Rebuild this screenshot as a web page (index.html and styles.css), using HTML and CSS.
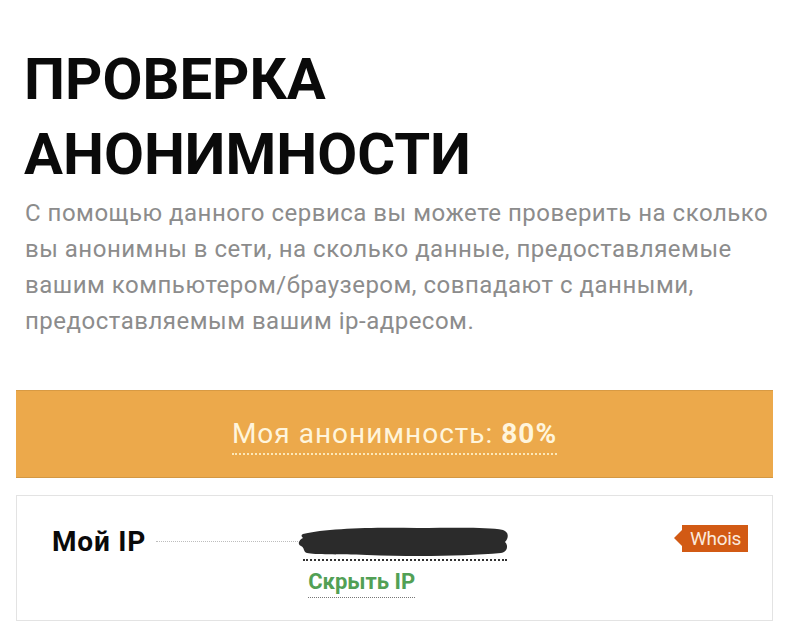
FILE: index.html
```html
<!DOCTYPE html>
<html lang="ru">
<head>
<meta charset="utf-8">
<link rel="stylesheet" href="styles.css">
</head>
<body>
<div class="page">
  <h1 class="title">ПРОВЕРКА<br>АНОНИМНОСТИ</h1>
  <p class="lead">С помощью данного сервиса вы можете проверить на сколько<br>вы анонимны в сети, на сколько данные, предоставляемые<br>вашим компьютером/браузером, совпадают с данными,<br>предоставляемым вашим ip-адресом.</p>
  <div class="score">
    <span class="score-text">Моя анонимность: <b>80%</b></span>
  </div>
  <div class="ipbox">
    <div class="ip-label">Мой IP</div>
    <div class="ip-dots"></div>
    <div class="ip-col">
      <div class="ip-value">
        <svg width="214" height="34" viewBox="0 0 214 34">
          <path d="M6 10 C30 4 80 3 120 4 C160 4 190 3 206 6 C212 8 212 14 208 18 C212 22 210 28 204 29 C170 32 120 33 70 31 C40 30 18 31 10 29 C6 28 8 24 4 22 C0 20 2 16 6 14 C4 12 4 11 6 10 Z" fill="#2b2b2b"/>
        </svg>
      </div>
      <a class="hide-ip">Скрыть IP</a>
    </div>
    <div class="whois">Whois</div>
  </div>
</div>
</body>
</html>
```
FILE: styles.css
```css
html, body {
  margin: 0;
  padding: 0;
  background: #fff;
}
.page {
  width: 800px;
  height: 632px;
  overflow: hidden;
  font-family: Roboto, "Noto Sans", sans-serif;
}
.title {
  margin: 0;
  padding: 42px 0 0 24px;
  font-size: 58px;
  line-height: 75px;
  font-weight: 700;
  color: #0a0a0a;
}
.lead {
  margin: 3px 0 0 25px;
  width: 770px;
  font-size: 24px;
  line-height: 36px;
  color: #8c8c8c;
  white-space: nowrap;
  letter-spacing: 0.5px;
}
.score {
  margin: 51px 0 0 16px;
  width: 757px;
  height: 86px;
  background: #eca94b;
  border-top: 1px solid #d89a43;
  border-bottom: 1px solid #d39843;
  display: flex;
  align-items: center;
  justify-content: center;
}
.score-text {
  color: #fff5dc;
  font-size: 28px;
  line-height: 32px;
  letter-spacing: 1px;
  padding-bottom: 3px;
  border-bottom: 2px dotted #fbe7b8;
  margin-top: 4px;
}
.score-text b {
  font-weight: 700;
}
.ipbox {
  margin: 17px 0 0 16px;
  width: 757px;
  height: 126px;
  border: 1px solid #e3e3e3;
  box-sizing: border-box;
  display: flex;
  align-items: flex-start;
  position: relative;
}
.ip-label {
  margin: 32px 0 0 35px;
  font-size: 28px;
  line-height: 28px;
  font-weight: 700;
  color: #0a0a0a;
  letter-spacing: 0.8px;
}
.ip-dots {
  width: 142px;
  margin: 45px 0 0 10px;
  border-top: 1px dotted #bdbdbd;
}
.ip-col {
  display: flex;
  flex-direction: column;
  align-items: flex-start;
  margin-top: 28px;
}
.ip-value {
  height: 34px;
  width: 204px;
  border-bottom: 2px dotted #333;
  padding-bottom: 1px;
  margin-left: 5px;
}
.ip-value svg {
  display: block;
  margin-left: -6px;
}
.hide-ip {
  margin: 10px 0 0 10px;
  font-size: 22px;
  line-height: 22px;
  font-weight: 700;
  color: #52a055;
  padding-bottom: 4px;
  border-bottom: 1px dotted #777;
}
.whois {
  position: absolute;
  right: 24px;
  top: 29px;
  background: #d25a14;
  color: #fbe9dc;
  font-size: 19px;
  height: 27px;
  line-height: 27px;
  padding: 0 7px 0 8px;
  letter-spacing: -0.3px;
}
.whois::before {
  content: "";
  position: absolute;
  left: -8px;
  top: 5px;
  border-style: solid;
  border-width: 8px 8px 8px 0;
  border-color: transparent #d25a14 transparent transparent;
}
```
